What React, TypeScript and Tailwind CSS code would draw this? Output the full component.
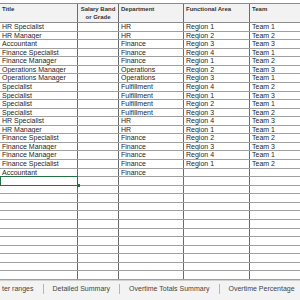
import React from 'react';

interface Row {
  title: string;
  dept: string;
  area: string;
  team: string;
}

const rows: Row[] = [
  { title: 'HR Specialist', dept: 'HR', area: 'Region 1', team: 'Team 1' },
  { title: 'HR Manager', dept: 'HR', area: 'Region 2', team: 'Team 2' },
  { title: 'Accountant', dept: 'Finance', area: 'Region 3', team: 'Team 3' },
  { title: 'Finance Specialist', dept: 'Finance', area: 'Region 4', team: 'Team 1' },
  { title: 'Finance Manager', dept: 'Finance', area: 'Region 1', team: 'Team 2' },
  { title: 'Operations Manager', dept: 'Operations', area: 'Region 2', team: 'Team 3' },
  { title: 'Operations Manager', dept: 'Operations', area: 'Region 3', team: 'Team 1' },
  { title: 'Specialist', dept: 'Fulfillment', area: 'Region 4', team: 'Team 2' },
  { title: 'Specialist', dept: 'Fulfillment', area: 'Region 1', team: 'Team 3' },
  { title: 'Specialist', dept: 'Fulfillment', area: 'Region 2', team: 'Team 1' },
  { title: 'Specialist', dept: 'Fulfillment', area: 'Region 3', team: 'Team 2' },
  { title: 'HR Specialist', dept: 'HR', area: 'Region 4', team: 'Team 3' },
  { title: 'HR Manager', dept: 'HR', area: 'Region 1', team: 'Team 1' },
  { title: 'Finance Specialist', dept: 'Finance', area: 'Region 2', team: 'Team 2' },
  { title: 'Finance Manager', dept: 'Finance', area: 'Region 3', team: 'Team 3' },
  { title: 'Finance Manager', dept: 'Finance', area: 'Region 4', team: 'Team 1' },
  { title: 'Finance Specialist', dept: 'Finance', area: 'Region 1', team: 'Team 2' },
  { title: 'Accountant', dept: 'Finance', area: '', team: '' },
];

const TOTAL_ROWS = 30;
const cols = 'grid grid-cols-[78px_41px_65px_66px_60px]';
const cell = 'border-r border-[#6b6b6b] px-[2px] whitespace-nowrap';

const tabs = ['ter ranges', 'Detailed Summary', 'Overtime Totals Summary', 'Overtime Percentage'];

const App: React.FC = () => {
  const all = Array.from({ length: TOTAL_ROWS }, (_, i) => rows[i]);

  return (
    <div className="w-[300px] h-[300px] overflow-hidden bg-white flex flex-col text-[#262626] font-['Liberation_Sans',Arial,sans-serif]">
      <div className="h-[3px] shrink-0 bg-white" />
      <div className={`${cols} h-[20px] shrink-0 bg-[#f2f2f2] border-y border-[#8c8c8c] text-[6px] font-bold leading-[8px] text-[#333]`}>
        <div className={`${cell} overflow-hidden pt-[1px]`}>Title</div>
        <div className={`${cell} overflow-hidden pt-[1px] text-center`}>Salary Band<br />or Grade</div>
        <div className={`${cell} overflow-hidden pt-[1px]`}>Department</div>
        <div className={`${cell} overflow-hidden pt-[1px]`}>Functional Area</div>
        <div className={`${cell} overflow-hidden pt-[1px]`}>Team</div>
      </div>
      <div className="flex flex-col h-[257px] shrink-0">
        {all.map((r, i) => (
          <div
            key={i}
            className={`${cols} flex-1 min-h-0 border-b border-[#a0a0a0] text-[7px] leading-[8px]`}
          >
            <div className={`${cell} relative ${i === 18 ? 'z-10' : 'overflow-hidden'}`}>
              {r?.title}
              {i === 18 && (
                <div className="absolute left-0 right-[-1px] top-[-1px] bottom-[-1px] border-[1.5px] border-[#217346]">
                  <div className="absolute right-[-2.5px] bottom-[-2.5px] w-[3px] h-[3px] bg-[#217346]" />
                </div>
              )}
            </div>
            <div className={`${cell} overflow-hidden`} />
            <div className={`${cell} overflow-hidden`}>{r?.dept}</div>
            <div className={`${cell} overflow-hidden`}>{r?.area}</div>
            <div className={`${cell} overflow-hidden`}>{r?.team}</div>
          </div>
        ))}
      </div>
      <div className="flex-1 bg-[#f3f3f3] border-t border-[#d0d0d0] flex items-start pt-[3px] text-[7px] text-[#444] whitespace-nowrap">
        {tabs.map((t, i) => (
          <div key={t} className="flex items-center">
            {i > 0 && <div className="w-px h-[10px] bg-[#b5b5b5]" />}
            <div className={`${i === 0 ? 'pl-[2px] pr-[9px]' : 'px-[9px]'} leading-[10px]`}>{t}</div>
          </div>
        ))}
      </div>
    </div>
  );
};

export default App;
